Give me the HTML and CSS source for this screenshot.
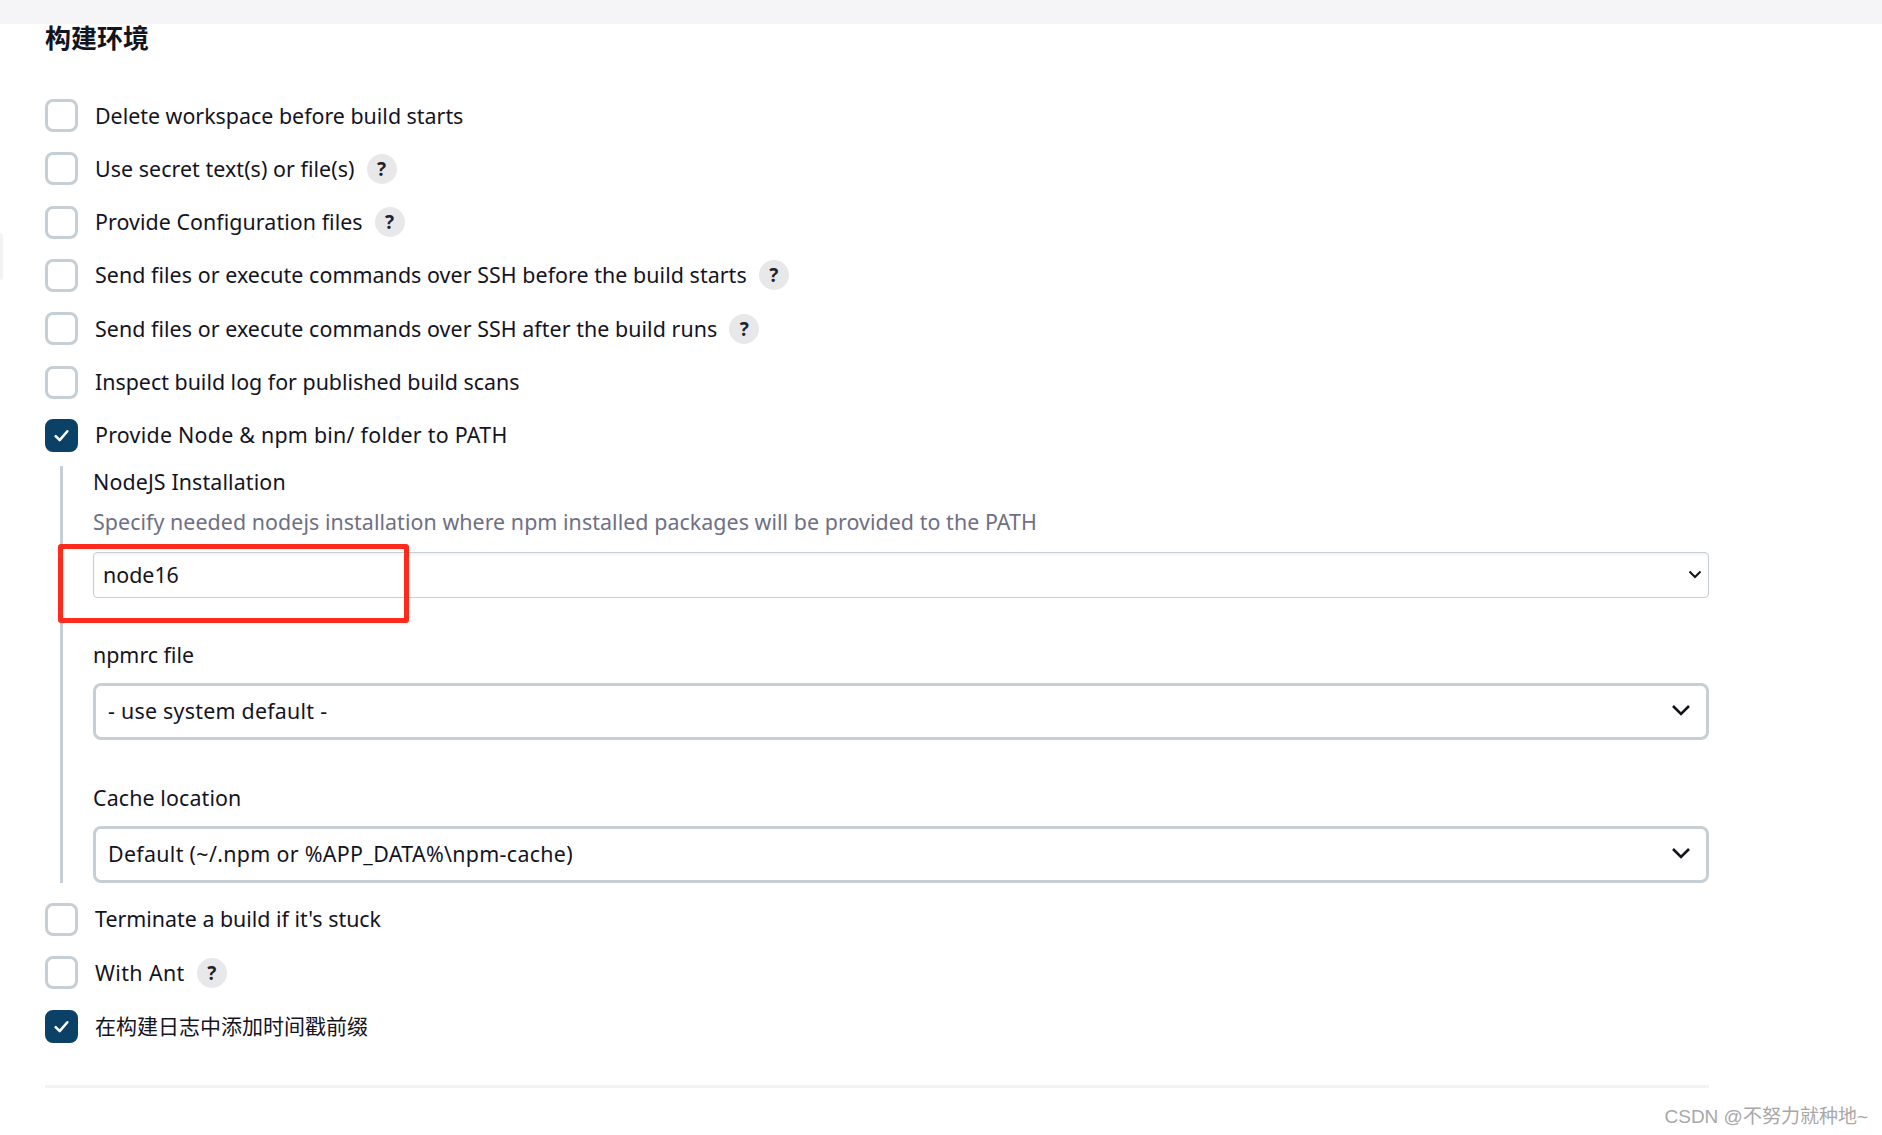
FILE: index.html
```html
<!DOCTYPE html>
<html lang="zh">
<head>
<meta charset="utf-8">
<title>构建环境</title>
<link rel="stylesheet" href="styles.css">
</head>
<body>
<div class="topbar"></div>
<div class="side-tab"></div>
<main class="section">
  <h2 class="title">构建环境</h2>
  <div class="options">
    <label class="row"><span class="box"></span><span class="text">Delete workspace before build starts</span></label>
    <label class="row"><span class="box"></span><span class="text sp-xs">Use secret text(s) or file(s)</span><span class="help">?</span></label>
    <label class="row"><span class="box"></span><span class="text sp-xs">Provide Configuration files</span><span class="help">?</span></label>
    <label class="row"><span class="box"></span><span class="text sp-xs">Send files or execute commands over SSH before the build starts</span><span class="help">?</span></label>
    <label class="row"><span class="box"></span><span class="text sp-xs">Send files or execute commands over SSH after the build runs</span><span class="help">?</span></label>
    <label class="row"><span class="box"></span><span class="text">Inspect build log for published build scans</span></label>
    <label class="row"><span class="box on"><svg class="tick" viewBox="0 0 16 16"><path d="M2.5 8.5 6.3 12.3 13.5 4"/></svg></span><span class="text sp-m">Provide Node &amp; npm bin/ folder to PATH</span></label>
  </div>
  <div class="nested">
    <div class="field-label sp-s">NodeJS Installation</div>
    <div class="hint sp-xs">Specify needed nodejs installation where npm installed packages will be provided to the PATH</div>
    <div class="select small">
      <span>node16</span>
      <svg class="chev-s" viewBox="0 0 14 9"><path d="M1.5 1.5 7 7 12.5 1.5"/></svg>
      <div class="marker"></div>
    </div>
    <div class="field-label npmrc">npmrc file</div>
    <div class="select large">
      <span class="sp-m">- use system default -</span>
      <svg class="chev-l" viewBox="0 0 20 13"><path d="M2 2 10 10 18 2"/></svg>
    </div>
    <div class="field-label cache sp-s">Cache location</div>
    <div class="select large">
      <span class="sp-l">Default (~/.npm or %APP_DATA%\npm-cache)</span>
      <svg class="chev-l" viewBox="0 0 20 13"><path d="M2 2 10 10 18 2"/></svg>
    </div>
  </div>
  <div class="options after">
    <label class="row"><span class="box"></span><span class="text">Terminate a build if it's stuck</span></label>
    <label class="row"><span class="box"></span><span class="text sp-xl">With Ant</span><span class="help">?</span></label>
    <label class="row"><span class="box on"><svg class="tick" viewBox="0 0 16 16"><path d="M2.5 8.5 6.3 12.3 13.5 4"/></svg></span><span class="text cjk">在构建日志中添加时间戳前缀</span></label>
  </div>
  <hr class="divider">
</main>
<div class="watermark">CSDN @不努力就种地~</div>
</body>
</html>
```
FILE: styles.css
```css
* { box-sizing: border-box; }
html, body { margin: 0; height: 100%; }
body {
  position: relative;
  background: #fff;
  color: #14141f;
  font-family: "Noto Sans", "Noto Sans CJK SC", sans-serif;
  font-size: 21.4px;
  overflow: hidden;
}
.sp-xs { letter-spacing: .06px; }
.sp-s { letter-spacing: .12px; }
.sp-m { letter-spacing: .25px; }
.sp-l { letter-spacing: .32px; }
.sp-xl { letter-spacing: .4px; }
.topbar { height: 24px; background: #f5f5f7; }
.side-tab {
  position: absolute;
  left: 0;
  top: 233px;
  width: 3px;
  height: 47px;
  background: #f3f3f6;
  border-radius: 0 4px 4px 0;
}
.section { width: 1709px; padding-left: 45px; }
.title {
  margin: 0;
  height: 75px;
  font-size: 26px;
  line-height: 26px;
  font-weight: 700;
  font-family: "Noto Sans CJK SC", sans-serif;
  color: #14141f;
}
.options { display: flex; flex-direction: column; gap: 20.33px; }
.options.after { margin-top: 20px; }
.row { display: flex; align-items: center; height: 33px; }
.box {
  flex: none;
  width: 33px;
  height: 33px;
  margin-right: 17px;
  border: 3px solid #c6cfd5;
  border-radius: 8px;
  background: #fff;
  display: flex;
  align-items: center;
  justify-content: center;
}
.box.on { background: #0b4166; border-color: #0b4166; }
.tick { width: 17px; height: 17px; }
.tick path { fill: none; stroke: #fff; stroke-width: 2.4; stroke-linecap: round; stroke-linejoin: round; }
.text { white-space: nowrap; line-height: 32px; }
.text.cjk { font-size: 21px; }
.help {
  flex: none;
  width: 30px;
  height: 30px;
  margin-left: 12px;
  border-radius: 50%;
  background: #e8e8ea;
  color: #22222c;
  font-size: 19px;
  font-weight: 700;
  line-height: 30px;
  text-align: center;
}
.nested {
  margin: 14px 0 0 15px;
  border-left: 3px solid #c6cfd5;
  padding-left: 30px;
  height: 417px;
}
.field-label { line-height: 32px; height: 31px; white-space: nowrap; }
.field-label.npmrc { margin-top: 41px; }
.field-label.cache { margin-top: 42px; }
.hint { margin-top: 9px; line-height: 32px; height: 31px; color: #6f6f85; white-space: nowrap; }
.select {
  position: relative;
  display: flex;
  align-items: center;
  justify-content: space-between;
  background: #fff;
}
.select.small {
  margin-top: 15px;
  height: 46px;
  padding: 0 6px 0 9px;
  border: 1px solid #c6cfd5;
  border-radius: 4px;
  box-shadow: inset 0 2px 2px rgba(198, 207, 213, .25);
}
.select.large {
  margin-top: 13px;
  height: 57px;
  padding: 0 15px 2px 12px;
  border: 3px solid #c6cfd5;
  border-radius: 8px;
}
.chev-s { width: 14px; height: 9px; }
.chev-s path { fill: none; stroke: #14141f; stroke-width: 2; }
.chev-l { width: 20px; height: 13px; }
.chev-l path { fill: none; stroke: #14141f; stroke-width: 2.6; }
.marker {
  position: absolute;
  left: -36px;
  top: -9px;
  width: 351px;
  height: 79px;
  border: 5px solid #ff2a1a;
  border-radius: 3px;
}
.divider { margin: 42px 0 0; height: 3px; border: 0; background: #f3f3f6; }
.watermark {
  position: absolute;
  right: 14px;
  top: 1104px;
  font-family: "Liberation Sans", "Noto Sans CJK SC", sans-serif;
  font-size: 19px;
  line-height: 26px;
  color: #a8a8a8;
  white-space: nowrap;
}
```
